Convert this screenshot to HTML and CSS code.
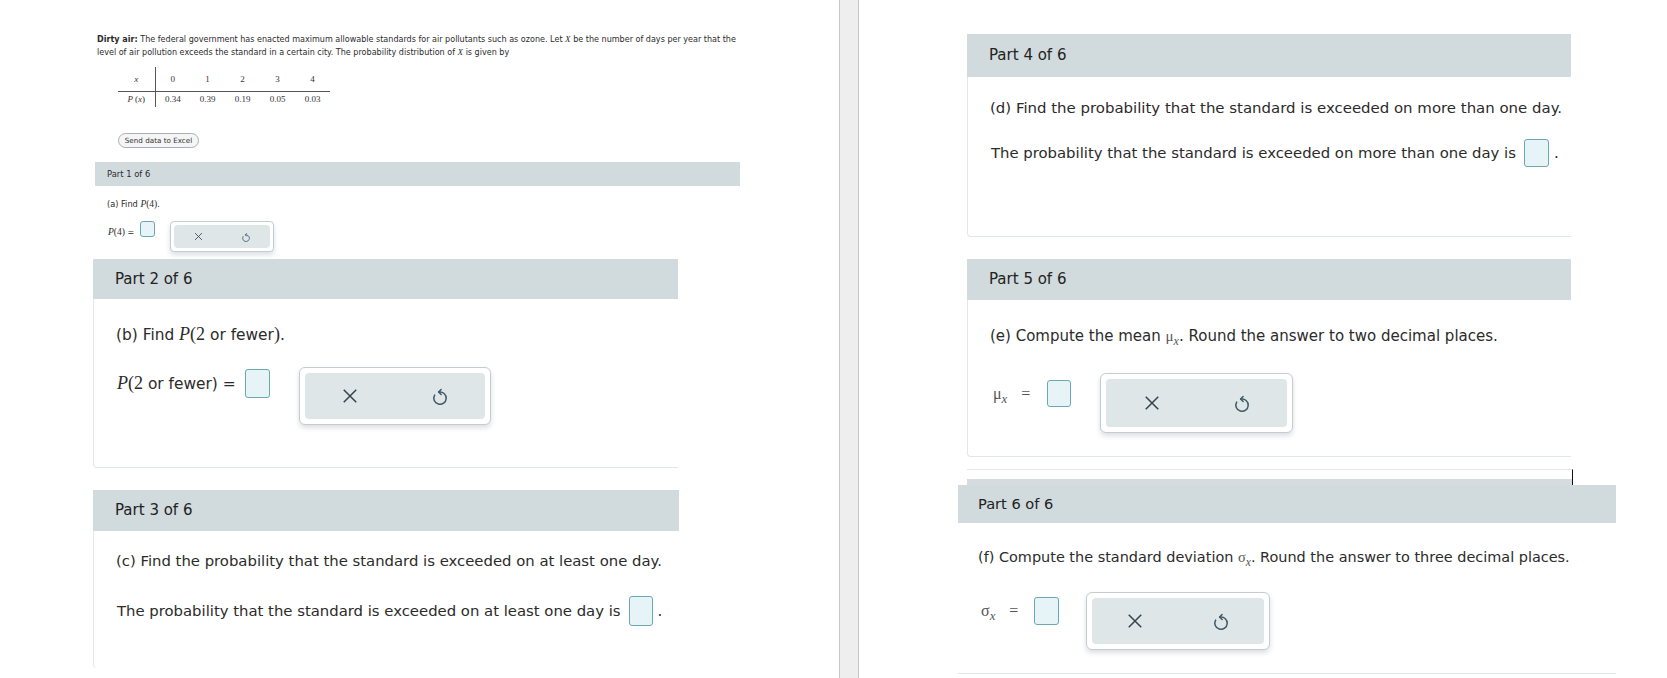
FILE: index.html
```html
<!DOCTYPE html>
<html>
<head>
<meta charset="utf-8">
<link rel="stylesheet" href="styles.css">
</head>
<body>
<div class="page">
  <div class="left">
    <div class="intro">
      <p><b>Dirty air:</b> The federal government has enacted maximum allowable standards for air pollutants such as ozone. Let <i class="m">X</i> be the number of days per year that the<br>level of air pollution exceeds the standard in a certain city. The probability distribution of <i class="m">X</i> is given by</p>
    </div>
    <table class="dist">
      <tr class="h"><td class="lab"><i>x</i></td><td>0</td><td>1</td><td>2</td><td>3</td><td>4</td></tr>
      <tr class="b"><td class="lab"><i>P</i>&thinsp;(<i>x</i>)</td><td>0.34</td><td>0.39</td><td>0.19</td><td>0.05</td><td>0.03</td></tr>
    </table>
    <button class="excel">Send data to Excel</button>

    <div class="part1">
      <div class="hd">Part 1 of 6</div>
      <p class="q">(a) Find <span class="mi">P</span><span class="mn">(4)</span>.</p>
      <div class="row">
        <span class="lbl"><span class="mi">P</span><span class="mn">(4)</span> =</span>
        <span class="box"></span>
        <div class="tools">
          <div class="inner">
            <span class="btn"><svg class="ix" viewBox="0 0 16 16"><path d="M3 3L13 13M13 3L3 13"/></svg></span>
            <span class="btn"><svg class="iu" viewBox="0 0 16 16"><path d="M7.2 5.1A4.5 4.5 0 1 1 4.1 7.3"/><path d="M8.8 3.3L7 5.1L8.8 6.9"/></svg></span>
          </div>
        </div>
      </div>
    </div>

    <div class="part p2">
      <div class="hd">Part 2 of 6</div>
      <div class="bd">
        <p class="q">(b) Find <span class="mi">P</span><span class="mn">(2</span> or fewer<span class="mn">)</span>.</p>
        <div class="row">
          <span class="lbl"><span class="mi">P</span><span class="mn">(2</span> or fewer) =</span>
          <span class="box"></span>
          <div class="tools">
            <div class="inner">
              <span class="btn"><svg class="ix" viewBox="0 0 16 16"><path d="M3 3L13 13M13 3L3 13"/></svg></span>
              <span class="btn"><svg class="iu" viewBox="0 0 16 16"><path d="M7.2 5.1A4.5 4.5 0 1 1 4.1 7.3"/><path d="M8.8 3.3L7 5.1L8.8 6.9"/></svg></span>
            </div>
          </div>
        </div>
      </div>
    </div>

    <div class="part p3">
      <div class="hd">Part 3 of 6</div>
      <div class="bd">
        <p class="q">(c) Find the probability that the standard is exceeded on at least one day.</p>
        <div class="row">
          <span class="lbl">The probability that the standard is exceeded on at least one day is</span>
          <span class="box"></span>
          <span class="dot">.</span>
        </div>
      </div>
    </div>
  </div>

  <div class="divider"></div>

  <div class="right">
    <div class="part p4">
      <div class="hd">Part 4 of 6</div>
      <div class="bd">
        <p class="q">(d) Find the probability that the standard is exceeded on more than one day.</p>
        <div class="row">
          <span class="lbl">The probability that the standard is exceeded on more than one day is</span>
          <span class="box"></span>
          <span class="dot">.</span>
        </div>
      </div>
    </div>

    <div class="part p5">
      <div class="hd">Part 5 of 6</div>
      <div class="bd">
        <p class="q">(e) Compute the mean <span class="gk">μ<sub>x</sub></span>. Round the answer to two decimal places.</p>
        <div class="row">
          <span class="lbl"><span class="gk">μ<sub>x</sub></span><span class="eq">=</span></span>
          <span class="box"></span>
          <div class="tools">
            <div class="inner">
              <span class="btn"><svg class="ix" viewBox="0 0 16 16"><path d="M3 3L13 13M13 3L3 13"/></svg></span>
              <span class="btn"><svg class="iu" viewBox="0 0 16 16"><path d="M7.2 5.1A4.5 4.5 0 1 1 4.1 7.3"/><path d="M8.8 3.3L7 5.1L8.8 6.9"/></svg></span>
            </div>
          </div>
        </div>
      </div>
    </div>

    <div class="seam"></div>
    <div class="seam-strip"></div>

    <div class="part p6">
      <div class="hd">Part 6 of 6</div>
      <div class="bd">
        <p class="q">(f) Compute the standard deviation <span class="gk">σ<sub>x</sub></span>. Round the answer to three decimal places.</p>
        <div class="row">
          <span class="lbl"><span class="gk">σ<sub>x</sub></span><span class="eq">=</span></span>
          <span class="box"></span>
          <div class="tools">
            <div class="inner">
              <span class="btn"><svg class="ix" viewBox="0 0 16 16"><path d="M3 3L13 13M13 3L3 13"/></svg></span>
              <span class="btn"><svg class="iu" viewBox="0 0 16 16"><path d="M7.2 5.1A4.5 4.5 0 1 1 4.1 7.3"/><path d="M8.8 3.3L7 5.1L8.8 6.9"/></svg></span>
            </div>
          </div>
        </div>
      </div>
    </div>
  </div>
</div>
</body>
</html>
```

FILE: styles.css
```css
* { box-sizing: border-box; }
html, body { margin: 0; padding: 0; background: #fff; }
body {
  font-family: "DejaVu Sans", Verdana, sans-serif;
  color: #2b2b2b;
  width: 1667px;
  height: 678px;
  overflow: hidden;
}
.page { display: flex; height: 678px; }
.left { width: 839px; flex: none; }
.divider {
  width: 20px; flex: none; background: #eeeeee;
  border-left: 1px solid #c6c6c6; border-right: 1px solid #c6c6c6;
}
.right { flex: 1; }

/* intro */
.intro { padding: 33px 0 0 97px; font-size: 8.05px; line-height: 12px; }
.intro p { margin: 0; }
.m { font-family: "Liberation Serif", "Times New Roman", serif; font-size: 9px; }

.dist {
  margin: 8px 0 0 118px; border-collapse: collapse;
  font-family: "Liberation Serif", "Times New Roman", serif; font-size: 9px; color: #333;
}
.dist td { width: 35px; text-align: center; padding: 0; }
.dist .lab { width: 37px; border-right: 1px solid #555; }
.dist tr.h td { height: 24px; border-bottom: 1px solid #555; }
.dist tr.b td { height: 16px; }

.excel {
  display: block; margin: 26px 0 0 118px; width: 81px; height: 15px; padding: 0;
  border: 1px solid #a9b0b3; border-radius: 8px; background: #f5f5f5;
  font-family: "DejaVu Sans", sans-serif; font-size: 7.2px; color: #333;
}

.mi { font-family: "Liberation Serif", "Times New Roman", serif; font-style: italic; }
.mn { font-family: "Liberation Serif", "Times New Roman", serif; }
.gk { font-family: "Liberation Serif", "Times New Roman", serif; color: #555; }
.gk sub { font-style: italic; font-size: 0.8em; vertical-align: -0.35em; line-height: 0; }

/* shared bits */
.box {
  display: block; flex: none;
  border: 1.5px solid #6aa8b4; border-radius: 3px; background: #e6f4f8;
}
.tools {
  flex: none; border: 1px solid #c3cdd1; border-radius: 6px; background: #fff;
  box-shadow: 0 3px 5px rgba(60, 80, 90, 0.18);
}
.inner {
  display: flex; height: 100%; background: #dfe6e8; border-radius: 4px;
}
.btn { flex: 1; display: flex; align-items: center; justify-content: center; }
.ix path { stroke: #34444c; stroke-width: 1.2; fill: none; }
.iu path { stroke: #3e5a66; stroke-width: 1.1; fill: none; stroke-linecap: round; stroke-linejoin: round; }

/* part 1 (small) */
.part1 { margin: 14px 0 0 95px; width: 645px; }
.part1 .hd {
  height: 24px; line-height: 24px; padding-left: 12px; font-size: 8.4px; background: #d1dadd;
}
.part1 .q { margin: 12px 0 0 12px; font-size: 8.2px; line-height: 12px; }
.part1 .q .mi, .part1 .q .mn { font-size: 9.5px; }
.part1 .row { display: flex; align-items: flex-start; margin: 11px 0 0 13px; }
.part1 .lbl { font-size: 8px; line-height: 22px; }
.part1 .lbl .mi, .part1 .lbl .mn { font-size: 9.5px; }
.part1 .box { width: 15px; height: 16px; margin-left: 6px; border-width: 1px; }
.part1 .tools { width: 104px; height: 31px; margin-left: 15px; padding: 3px; border-radius: 4px; }
.part1 .ix { width: 11px; height: 11px; }
.part1 .iu { width: 12px; height: 12px; }

/* big parts */
.part .hd {
  line-height: 1; display: flex; align-items: center; padding-left: 22px;
  font-size: 15px; background: #d1dadd; color: #222;
}
.part .bd { border-left: 1px solid #e1e6e8; border-bottom: 1px solid #e1e6e8; border-bottom-left-radius: 4px; padding-left: 22px; }
.part .q { margin: 0; font-size: 15px; line-height: 20px; }
.part .q .mi, .part .q .mn { font-size: 16.5px; }
.part .row { display: flex; align-items: flex-start; }
.part .lbl { font-size: 15px; margin-left: 1px; }
.part .lbl .mi, .part .lbl .mn { font-size: 16.5px; }
.part .tools { padding: 5px; }
.ix { width: 20px; height: 20px; }
.iu { width: 22px; height: 22px; }
.dot { font-size: 15px; margin-left: 5px; }
.eq { font-family: "Liberation Serif", "Times New Roman", serif; color: #555; margin-left: 14px; font-size: 16px; }

.p2 { margin: 7px 0 0 93px; width: 585px; }
.p2 .hd { height: 40px; }
.p2 .q { padding-top: 25px; font-size: 15.4px; }
.p2 .q .mi, .p2 .q .mn { font-size: 18px; }
.p2 .row { margin-top: 22px; padding-bottom: 42px; }
.p2 .lbl { margin-top: 2px; line-height: 29px; font-size: 15.4px; }
.p2 .lbl .mi, .p2 .lbl .mn { font-size: 18px; }
.p2 .box { width: 25px; height: 29px; margin: 2px 0 0 9px; }
.p2 .tools { width: 192px; height: 58px; margin-left: 29px; }

.p3 { margin: 22px 0 0 93px; width: 586px; }
.p3 .hd { height: 41px; }
.p3 .bd { border-bottom: none; height: 137px; }
.p3 .q { padding-top: 20px; font-size: 14.85px; }
.p3 .row { margin-top: 25px; align-items: center; }
.p3 .lbl { line-height: 30px; font-size: 14.85px; }
.p3 .box { width: 24px; height: 30px; margin-left: 8px; }

.p4 { margin: 34px 0 0 108px; width: 604px; }
.p4 .hd { height: 43px; }
.p4 .q { padding-top: 21px; font-size: 14.95px; }
.p4 .row { margin-top: 21px; padding-bottom: 69px; align-items: center; }
.p4 .lbl { line-height: 28px; font-size: 14.85px; }
.p4 .box { width: 25px; height: 28px; margin-left: 8px; }

.p5 { margin: 22px 0 0 108px; width: 604px; }
.p5 .hd { height: 41px; }
.p5 .q { padding-top: 26px; }
.p5 .row { margin-top: 27px; padding-bottom: 23px; }
.p5 .lbl { margin: 7px 0 0 3px; line-height: 27px; font-size: 16px; }
.p5 .box { width: 24px; height: 27px; margin: 7px 0 0 17px; }
.p5 .tools { width: 193px; height: 60px; margin-left: 29px; }

.seam { margin: 12px 0 0 108px; width: 606px; height: 10px; border-top: 1px solid #e4e8ea; border-right: 1px solid #111; }
.seam-strip { margin-left: 108px; width: 606px; height: 6px; background: #d5dcdf; border-right: 1px solid #111; }

.p6 { margin: 0 0 0 99px; width: 658px; }
.p6 .hd { height: 38px; padding-left: 20px; font-size: 14.6px; }
.p6 .bd { border-left: none; padding-left: 20px; border-bottom-left-radius: 0; }
.p6 .q { padding-top: 24px; font-size: 14.45px; }
.p6 .row { margin-top: 25px; padding-bottom: 23px; }
.p6 .lbl { margin: 5px 0 0 3px; line-height: 28px; font-size: 16px; }
.p6 .box { width: 25px; height: 28px; margin: 5px 0 0 16px; }
.p6 .tools { width: 184px; height: 58px; margin-left: 27px; }
```
